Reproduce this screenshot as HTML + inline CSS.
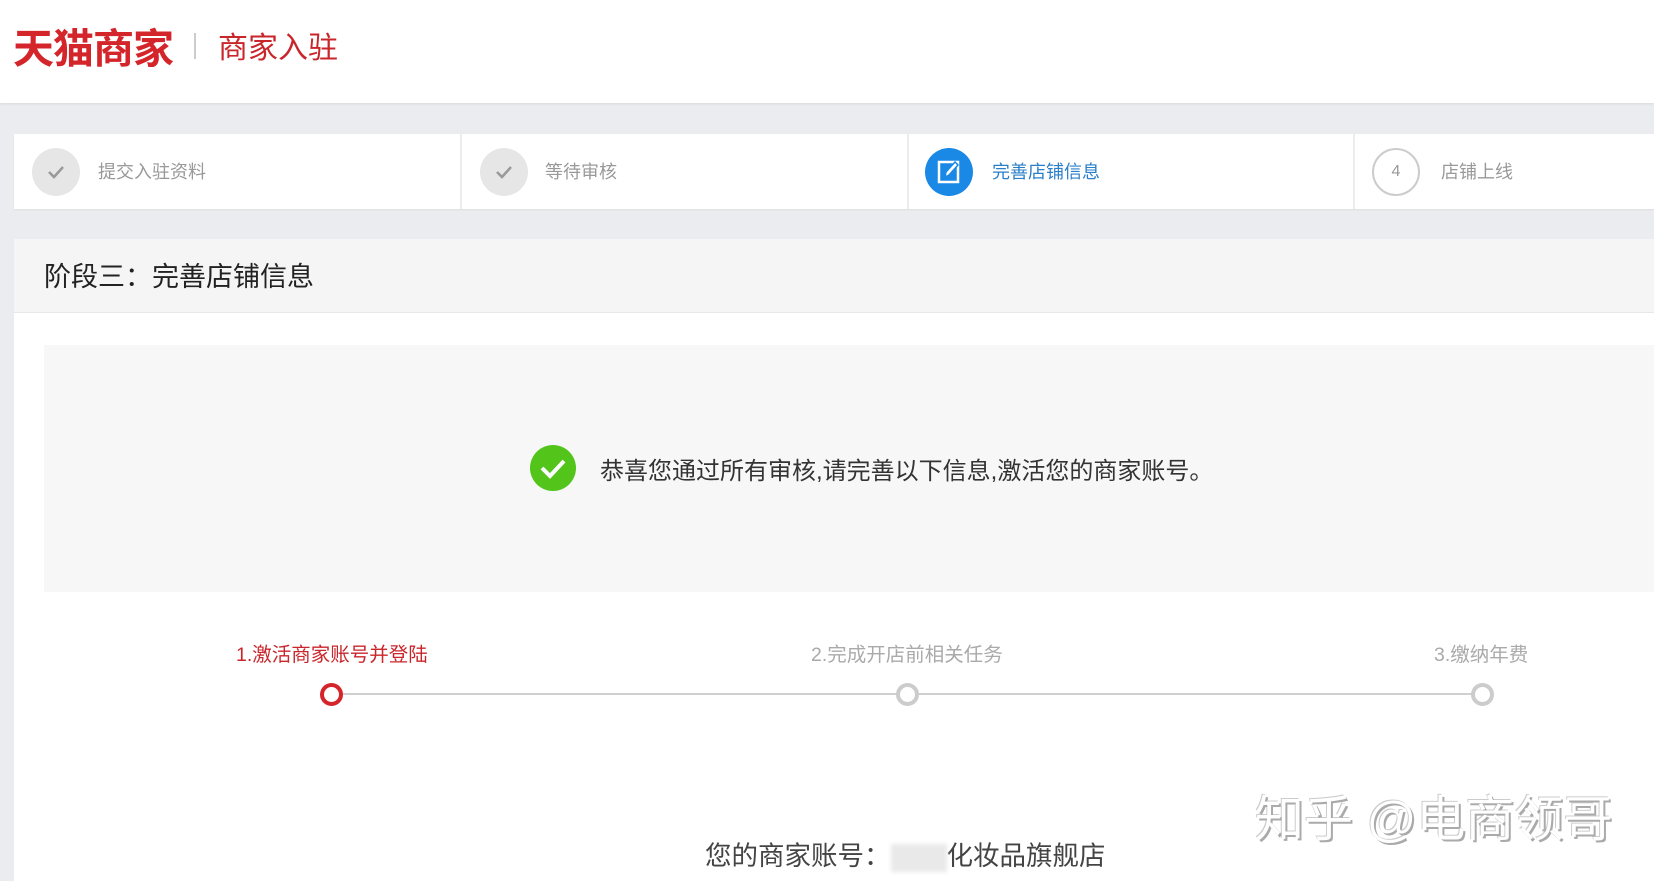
<!DOCTYPE html>
<html><head><meta charset="utf-8"><style>
*{margin:0;padding:0;box-sizing:border-box}
body{width:1654px;height:881px;overflow:hidden;background:#ebecef;font-family:"Liberation Sans","Noto Sans CJK SC",sans-serif;position:relative}
.abs{position:absolute;white-space:nowrap}
.hdr{position:absolute;left:0;top:0;width:1654px;height:103px;background:#fff;box-shadow:0 1px 3px rgba(0,0,0,.08)}
.steps{position:absolute;left:14px;top:134px;width:1640px;height:75px;background:#fff;box-shadow:0 1px 2px rgba(0,0,0,.06)}
.sep{position:absolute;top:0;width:2px;height:75px;background:#ebecef}
.circ{position:absolute;width:48px;height:48px;border-radius:50%;top:14px}
.st{position:absolute;top:24px;font-size:18px;color:#999}
</style></head><body>
<div class="hdr">
<div class="abs" style="left:13px;top:15px;font-size:41px;font-weight:bold;color:#d4252b;letter-spacing:-1px">天猫商家</div>
<div class="abs" style="left:194px;top:33px;width:2px;height:26px;background:#ccc"></div>
<div class="abs" style="left:218px;top:23px;font-size:30px;color:#c9262c">商家入驻</div>
</div>
<div class="steps">
<div class="sep" style="left:446px"></div><div class="sep" style="left:893px"></div><div class="sep" style="left:1339px"></div>
<div class="circ" style="left:18px;background:#e6e6e6"><svg width="48" height="48"><path d="M17 24 l5 5 l9 -10" stroke="#999" stroke-width="2.5" fill="none"/></svg></div>
<div class="st" style="left:84px">提交入驻资料</div>
<div class="circ" style="left:466px;background:#e6e6e6"><svg width="48" height="48"><path d="M17 24 l5 5 l9 -10" stroke="#999" stroke-width="2.5" fill="none"/></svg></div>
<div class="st" style="left:531px">等待审核</div>
<div class="circ" style="left:911px;background:#1a89e6"><svg width="48" height="48"><rect x="14" y="14" width="19" height="20" stroke="#fff" stroke-width="2.5" fill="none"/><path d="M20 29 l1 -5 l9 -10 l3 3 l-9 10 z" fill="#fff" stroke="#1a89e6" stroke-width="1.5"/></svg></div>
<div class="st" style="left:978px;color:#2a7fc9">完善店铺信息</div>
<div class="circ" style="left:1358px;border:2px solid #ccc;color:#999;font-size:16px;text-align:center;line-height:44px">4</div>
<div class="st" style="left:1427px">店铺上线</div>
</div>
<div class="abs" style="left:14px;top:239px;width:1640px;height:642px;background:#fff">
<div style="height:74px;background:#f5f5f6;border-bottom:1px solid #e8e8e8;font-size:27px;color:#222;padding:16px 0 0 30px">阶段三：完善店铺信息</div>
</div>
<div class="abs" style="left:44px;top:345px;width:1610px;height:247px;background:#f7f7f8"></div>
<svg class="abs" style="left:530px;top:445px" width="46" height="46"><circle cx="23" cy="23" r="23" fill="#52c41a"/><path d="M12 23 l8 8 l14 -15" stroke="#fff" stroke-width="4" fill="none"/></svg>
<div class="abs" style="left:600px;top:451px;font-size:24px;color:#333">恭喜您通过所有审核,请完善以下信息,激活您的商家账号。</div>
<div class="abs" style="left:331px;top:693px;width:1151px;height:2px;background:#d0d0d0"></div>
<div class="abs" style="left:320px;top:683px;width:23px;height:23px;border-radius:50%;border:4px solid #d4252b;background:#fff"></div>
<div class="abs" style="left:896px;top:683px;width:23px;height:23px;border-radius:50%;border:4px solid #ccc;background:#fff"></div>
<div class="abs" style="left:1471px;top:683px;width:23px;height:23px;border-radius:50%;border:4px solid #ccc;background:#fff"></div>
<div class="abs" style="left:236px;top:638px;font-size:19.5px;color:#c9262c">1.激活商家账号并登陆</div>
<div class="abs" style="left:811px;top:638px;font-size:19.5px;color:#aaa">2.完成开店前相关任务</div>
<div class="abs" style="left:1434px;top:638px;font-size:19.5px;color:#aaa">3.缴纳年费</div>
<div class="abs" style="left:705px;top:834px;font-size:26.5px;color:#444">您的商家账号：<span style="display:inline-block;width:56px;height:28px;background:#e9e9e9;vertical-align:middle;filter:blur(2px)"></span>化妆品旗舰店</div>
<div class="abs" style="left:1255px;top:780px;font-size:49px;color:#fff;text-shadow:2px 2px 0 #aaa,-1px -1px 0 #ccc">知乎 @电商领哥</div>
</body></html>
